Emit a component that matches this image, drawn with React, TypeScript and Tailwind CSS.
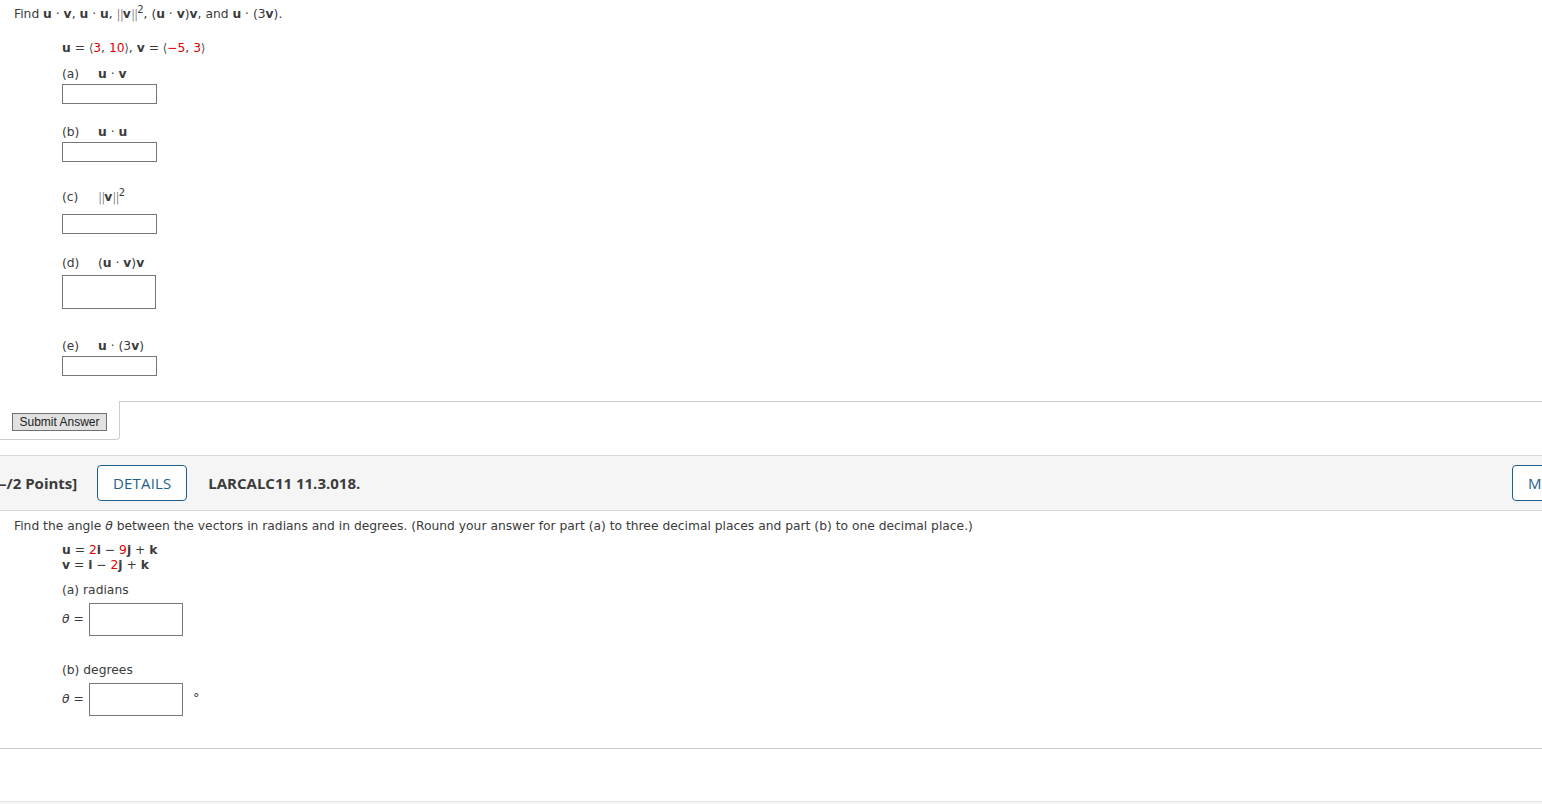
import React from 'react';

const body = "font-['DejaVu_Sans',sans-serif] text-[12.3px] leading-[15px] text-[#3b3b3b]";

const Red: React.FC<{ children: React.ReactNode }> = ({ children }) => (
  <span className="text-[#e00000]">{children}</span>
);

const B: React.FC<{ children: React.ReactNode }> = ({ children }) => (
  <b className="font-bold">{children}</b>
);

const Norm: React.FC<{ children: React.ReactNode }> = ({ children }) => (
  <span className="tracking-[-1px] font-light">{children}</span>
);

const Ang: React.FC<{ children: React.ReactNode }> = ({ children }) => (
  <span className="font-['DejaVu_Sans_Condensed',sans-serif]">{children}</span>
);

const Box: React.FC<{ tall?: boolean; wide?: boolean }> = ({ tall, wide }) => (
  <div
    className={`border border-[#767676] bg-white ${wide ? 'w-[94px] h-[33px]' : tall ? 'w-[94px] h-[34px]' : 'w-[95px] h-[20px]'}`}
  />
);

const Part: React.FC<{ label: string; children: React.ReactNode }> = ({ label, children }) => (
  <div className="flex">
    <span className="w-[36px]">{label}</span>
    <span>{children}</span>
  </div>
);

export default function App() {
  return (
    <div className={`${body} w-[1542px] h-[804px] overflow-hidden bg-white`}>
      {/* first question */}
      <div className="pl-[14px] pt-[7px]">
        <p>
          Find <B>u</B> · <B>v</B>, <B>u</B> · <B>u</B>, <Norm>||</Norm><B>v</B><Norm>||</Norm><sup className="text-[10px]">2</sup>, (<B>u</B> · <B>v</B>)<B>v</B>, and <B>u</B> · (3<B>v</B>).
        </p>
        <div className="ml-[48px] mt-[19px]">
          <p>
            <B>u</B> = <Ang>⟨</Ang><Red>3</Red>, <Red>10</Red><Ang>⟩</Ang>, <B>v</B> = <Ang>⟨</Ang><Red>−5</Red>, <Red>3</Red><Ang>⟩</Ang>
          </p>
          <div className="mt-[11px]">
            <Part label="(a)"><B>u</B> · <B>v</B></Part>
          </div>
          <div className="mt-[2px]"><Box /></div>
          <div className="mt-[21px]">
            <Part label="(b)"><B>u</B> · <B>u</B></Part>
          </div>
          <div className="mt-[2px]"><Box /></div>
          <div className="mt-[28px]">
            <Part label="(c)">
              <Norm>||</Norm><B>v</B><Norm>||</Norm><sup className="text-[10px]">2</sup>
            </Part>
          </div>
          <div className="mt-[9px]"><Box /></div>
          <div className="mt-[22px]">
            <Part label="(d)">(<B>u</B> · <B>v</B>)<B>v</B></Part>
          </div>
          <div className="mt-[4px]"><Box tall /></div>
          <div className="mt-[30px]">
            <Part label="(e)"><B>u</B> · (3<B>v</B>)</Part>
          </div>
          <div className="mt-[2px]"><Box /></div>
        </div>
      </div>

      {/* submit row */}
      <div className="flex mt-[25px] h-[39px]">
        <div className="w-[120px] border-r border-b border-[#cccccc] rounded-br-[4px] flex items-center pl-[12px] pt-[3px]">
          <button className="font-['Liberation_Sans',Arial,sans-serif] text-[12px] leading-[14px] text-[#222] bg-[#e1e1e1] border border-[#707070] px-[6px] py-[1px] w-[95px] h-[18px] whitespace-nowrap">
            Submit Answer
          </button>
        </div>
        <div className="flex-1 border-t border-[#cccccc]" />
      </div>

      {/* second question header */}
      <div className="mt-[15px] h-[56px] bg-[#f5f5f5] border-y border-[#d6d6d6] flex items-center font-['Open_Sans',sans-serif] text-[15px] text-[#3b3b3b]">
        <span className="font-bold -ml-[1px]">–/2 Points]</span>
        <button className="ml-[20px] w-[90px] h-[36px] border border-[#1f5f8b] rounded-[4px] bg-white text-[#1f5f8b] text-[15px] tracking-[0.2px]">
          DETAILS
        </button>
        <span className="ml-[21px] font-bold">LARCALC11 11.3.018.</span>
        <div className="flex-1" />
        <button className="shrink-0 -mr-[60px] w-[90px] h-[36px] border border-[#1f5f8b] rounded-[4px] bg-white text-[#1f5f8b] text-[15px] text-left pl-[15px] whitespace-nowrap overflow-hidden">
          MY NOTES
        </button>
      </div>

      {/* second question body */}
      <div className="pl-[14px] pt-[8px]">
        <p>
          Find the angle <i>θ</i> between the vectors in radians and in degrees. (Round your answer for part (a) to three decimal places and part (b) to one decimal place.)
        </p>
        <div className="ml-[48px] mt-[9px]">
          <p>
            <B>u</B> = <Red>2</Red><B>i</B> − <Red>9</Red><B>j</B> + <B>k</B>
          </p>
          <p>
            <B>v</B> = <B>i</B> − <Red>2</Red><B>j</B> + <B>k</B>
          </p>
          <p className="mt-[10px]">(a) radians</p>
          <div className="flex items-center mt-[5px]">
            <span className="w-[27px]"><i>θ</i> =</span>
            <Box wide />
          </div>
          <p className="mt-[27px]">(b) degrees</p>
          <div className="flex items-center mt-[5px]">
            <span className="w-[27px]"><i>θ</i> =</span>
            <Box wide />
            <span className="ml-[10px] -mt-[4px] text-[13px]">°</span>
          </div>
        </div>
      </div>

      <div className="mt-[32px] border-t border-[#cccccc] h-[53px]" />
      <div className="border-t border-[#e5e5e5] bg-[#f5f5f5] h-[10px]" />
    </div>
  );
}
